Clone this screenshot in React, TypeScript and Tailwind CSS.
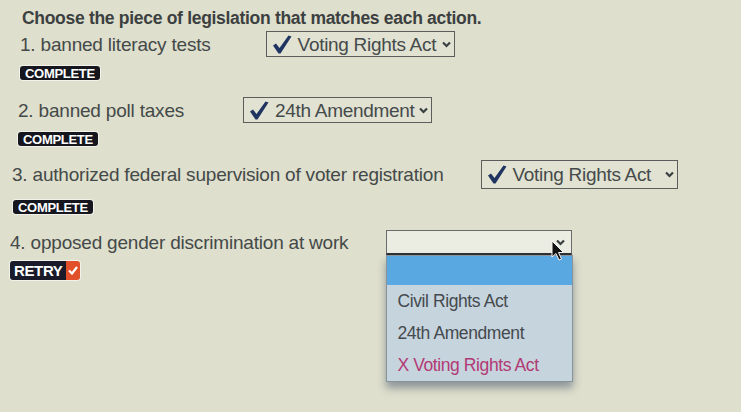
import React from 'react';

const Check = () => (
   <svg width="20" height="19" viewBox="0 0 20 19" className="shrink-0">
      <path d="M1 10.5 L4 8.5 L7.5 13 L16.5 0.5 L19.5 1.5 L8.5 18.5 L6.5 18.5 Z" fill="#1f3461" />
   </svg>
);

const Chevron = () => (
   <svg width="9" height="7" viewBox="0 0 9 7" className="shrink-0">
      <polyline points="1,1.5 4.5,5 8,1.5" fill="none" stroke="#3a3f42" strokeWidth="2.2" />
   </svg>
);

const Badge = () => (
   <div className="flex h-[14px] items-center rounded-[3px] bg-[#16161f] px-[5px] text-[13px] font-bold uppercase leading-none tracking-[-0.3px] text-white ring-1 ring-[#f2f2ea]">
      Complete
   </div>
);

type RowProps = {
   pad: string;
   label: string;
   gap: string;
   width: string;
   height: string;
   value: string;
};

const Row = ({ pad, label, gap, width, height, value }: RowProps) => (
   <div className={`flex items-center ${pad}`}>
      <span className="text-[19px] leading-none tracking-[-0.2px] text-[#444949]">{label}</span>
      <div
         className={`flex items-center border-[1.5px] border-[#5b5d5c] bg-[#e1e2d2] pl-[5px] pr-[3px] ${gap} ${width} ${height}`}
      >
         <Check />
         <span className="ml-[6px] text-[19px] leading-none tracking-[-0.3px] text-[#454a4b]">{value}</span>
         <span className="ml-auto">
            <Chevron />
         </span>
      </div>
   </div>
);

export default function App() {
   return (
      <div className="relative h-[412px] w-[741px] overflow-hidden bg-[#dedfcc] font-['Liberation_Sans',Arial,sans-serif]">
         <div className="pt-[9px]">
            <h1 className="pl-[22px] text-[17.5px] font-bold leading-[18px] tracking-[-0.3px] text-[#3c4041]">
               Choose the piece of legislation that matches each action.
            </h1>

            <div className="mt-[4px]">
               <Row
                  pad="pl-[20px]"
                  label="1. banned literacy tests"
                  gap="ml-[55px]"
                  width="w-[189px]"
                  height="h-[26px]"
                  value="Voting Rights Act"
               />
            </div>
            <div className="mt-[9px] flex pl-[20px]">
               <Badge />
            </div>

            <div className="mt-[17px]">
               <Row
                  pad="pl-[18px]"
                  label="2. banned poll taxes"
                  gap="ml-[59px]"
                  width="w-[189px]"
                  height="h-[26px]"
                  value="24th Amendment"
               />
            </div>
            <div className="mt-[9px] flex pl-[18px]">
               <Badge />
            </div>

            <div className="mt-[14px]">
               <Row
                  pad="pl-[12px]"
                  label="3. authorized federal supervision of voter registration"
                  gap="ml-[37px]"
                  width="w-[197px]"
                  height="h-[29px]"
                  value="Voting Rights Act"
               />
            </div>
            <div className="mt-[11px] flex pl-[13px]">
               <Badge />
            </div>

            <div className="mt-[16px] flex items-center pl-[10px]">
               <span className="text-[19px] leading-none tracking-[-0.2px] text-[#444949]">
                  4. opposed gender discrimination at work
               </span>
               <div className="relative ml-[38px] h-[25px] w-[186px]">
                  <div className="flex h-full items-center justify-end border border-b-2 border-[#6a6c6b] border-b-[#2e3236] bg-[#ebece2] pr-[6px]">
                     <Chevron />
                  </div>
                  <svg width="14" height="22" viewBox="0 0 14 22" className="absolute right-[7px] top-[10px] z-20">
                     <path d="M1 1 L1 17 L5 13.5 L8 20 L10.5 19 L7.5 12.5 L12.5 12.5 Z" fill="#111" stroke="#f4f4f4" strokeWidth="1" />
                  </svg>
                  <div className="absolute left-0 top-full z-10 w-[187px] border border-[#8a939a] bg-[#c6d4de] shadow-[0_6px_8px_rgba(40,60,90,0.45)]">
                     <div className="h-[29px] bg-[#5aa8e2]" />
                     <div className="flex h-[32px] items-center pl-[10px] text-[17.5px] tracking-[-0.4px] text-[#454a4e]">Civil Rights Act</div>
                     <div className="flex h-[32px] items-center pl-[10px] text-[17.5px] tracking-[-0.4px] text-[#454a4e]">24th Amendment</div>
                     <div className="flex h-[32px] items-center pl-[10px] text-[17.5px] tracking-[-0.4px] text-[#b23a74]">X Voting Rights Act</div>
                  </div>
               </div>
            </div>
            <div className="mt-[6px] flex pl-[10px]">
               <div className="flex h-[19px] items-stretch overflow-hidden rounded-[3px] ring-1 ring-[#f2f2ea]">
                  <span className="flex items-center bg-[#1a1b2a] px-[4px] text-[15px] font-bold leading-none tracking-tight text-white">RETRY</span>
                  <span className="flex w-[14px] items-center justify-center bg-[#e2502a]">
                     <svg width="10" height="9" viewBox="0 0 10 9">
                        <polyline points="1,4.5 4,7.5 9,1" fill="none" stroke="#fff" strokeWidth="2.2" />
                     </svg>
                  </span>
               </div>
            </div>
         </div>
      </div>
   );
}
